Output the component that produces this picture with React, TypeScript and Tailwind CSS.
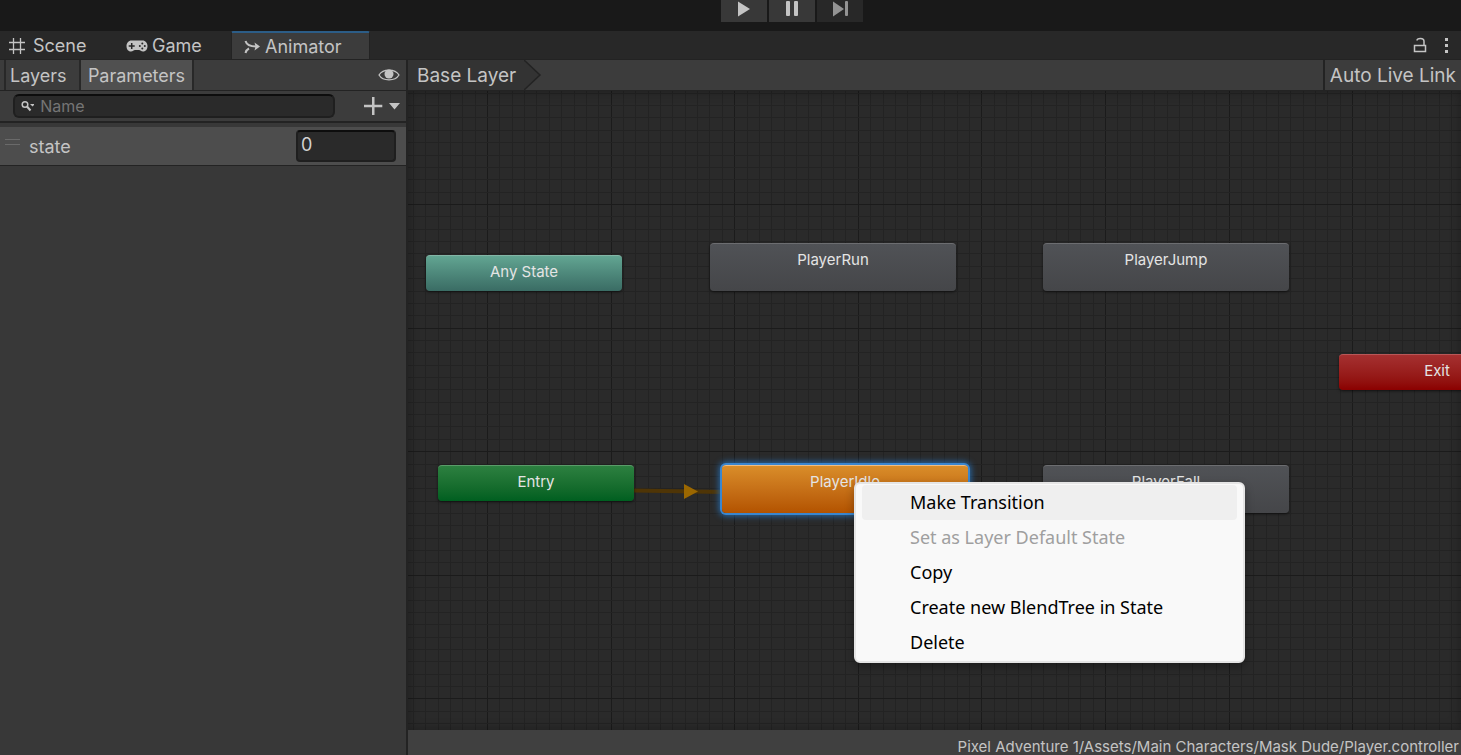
import React, { useState } from 'react';

interface StateNode {
  id: string;
  label: string;
  position: string;
  colors: string;
}

const plainShadow = 'shadow-[0_1px_3px_rgba(0,0,0,0.6)]';
const selectedShadow = 'shadow-[0_0_0_2px_#3a86cf,0_0_6px_3px_#2769a8]';

const stateNodes: StateNode[] = [
  { id: 'any', label: 'Any State', position: 'left-[18px] top-[164px] w-[196px] h-9', colors: 'border-t-[#83b5a6] from-[#62a592] to-[#3a6c64]' },
  { id: 'run', label: 'PlayerRun', position: 'left-[302px] top-[152px] w-[246px] h-12', colors: 'border-t-[#6c6d70] from-[#505256] to-[#454649]' },
  { id: 'jump', label: 'PlayerJump', position: 'left-[635px] top-[152px] w-[246px] h-12', colors: 'border-t-[#6c6d70] from-[#505256] to-[#454649]' },
  { id: 'exit', label: 'Exit', position: 'left-[931px] top-[263px] w-[196px] h-9', colors: 'border-t-[#b85757] from-[#a53030] to-[#8b0000]' },
  { id: 'entry', label: 'Entry', position: 'left-[30px] top-[374px] w-[196px] h-9', colors: 'border-t-[#5a9c69] from-[#2c8040] to-[#005f20]' },
  { id: 'idle', label: 'PlayerIdle', position: 'left-[314px] top-[374px] w-[246px] h-12', colors: 'border-t-[#edbd85] from-[#d98d29] to-[#b35300]' },
  { id: 'fall', label: 'PlayerFall', position: 'left-[635px] top-[374px] w-[246px] h-12', colors: 'border-t-[#6c6d70] from-[#505256] to-[#454649]' },
];

const menuItems = [
  { label: 'Make Transition', disabled: false },
  { label: 'Set as Layer Default State', disabled: true },
  { label: 'Copy', disabled: false },
  { label: 'Create new BlendTree in State', disabled: false },
  { label: 'Delete', disabled: false },
];

const GridLines: React.FC = () => {
  const step = 12.36;
  const lines = Array.from({ length: 240 }, (_, i) => i - 9);

  return (
    <svg className="absolute inset-0 h-full w-full" shapeRendering="crispEdges" aria-hidden="true">
      {lines.map((i) => {
        const x = Math.round(79 + i * step);
        return <line key={`x${i}`} x1={x + 0.5} x2={x + 0.5} y1="0" y2="100%" stroke={i % 10 === 0 ? '#1b1b1b' : '#232323'} />;
      })}
      {lines.map((i) => {
        const y = Math.round(113 + i * step);
        return <line key={`y${i}`} x1="0" x2="100%" y1={y + 0.5} y2={y + 0.5} stroke={i % 10 === 0 ? '#1b1b1b' : '#232323'} />;
      })}
    </svg>
  );
};

const PlaybackControls: React.FC = () => (
  <div className="flex h-[31px] shrink-0 items-start gap-0.5 bg-[#191919] pl-[721px]">
    <button type="button" aria-label="Play" className="flex h-[22px] w-[46px] justify-center bg-[#383838]">
      <svg width="46" height="22" fill="#c4c4c4"><path d="M17 1.5v15L29 9z" /></svg>
    </button>
    <button type="button" aria-label="Pause" className="flex h-[22px] w-[46px] justify-center bg-[#383838]">
      <svg width="46" height="22" fill="#c4c4c4"><rect x="17" y="1" width="4" height="15" rx="1" /><rect x="25" y="1" width="4" height="15" rx="1" /></svg>
    </button>
    <button type="button" aria-label="Step" className="flex h-[22px] w-[46px] justify-center bg-[#282828]">
      <svg width="46" height="22" fill="#939393"><path d="M16 1.5v15L27 9z" /><rect x="28" y="1" width="3" height="15" rx="1" /></svg>
    </button>
  </div>
);

const WindowTabs: React.FC = () => (
  <div className="flex h-[29px] shrink-0 border-b border-[#232323] bg-[#282828] text-lg leading-7 text-[#c4c4c4]">
    <button type="button" className="flex w-[117px] items-center gap-2 pl-[9px] pt-0.5">
      <svg width="16" height="16" fill="none" stroke="#c4c4c4" strokeWidth="1.3"><path d="M4.5 0v16M11.5 0v16M0 4.5h16M0 11.5h16" /></svg>
      Scene
    </button>
    <button type="button" className="flex w-[114px] items-center gap-1 pl-[9px] pt-0.5">
      <svg width="22" height="12">
        <path d="M5.5 .5h11C19.500 .5 21.500 3 21.500 6s-1.500 5.500-4.500 5.500c-2 0-2.500-1.500-4-1.500H9c-1.500 0-2 1.500-4 1.500C2 11.500 .5 9 .5 6S2.500 .5 5.500 .5z" fill="#c4c4c4" />
        <path d="M5.700 3v6M2.700 6h6" stroke="#282828" strokeWidth="1.500" />
        <g fill="#282828"><circle cx="16.300" cy="3.500" r="1" /><circle cx="16.300" cy="8.500" r="1" /><circle cx="13.800" cy="6" r="1" /><circle cx="18.800" cy="6" r="1" /></g>
      </svg>
      Game
    </button>
    <button type="button" className="flex w-[139px] items-center gap-1 rounded-t-xs border-x border-t-2 border-x-[#232323] border-t-[#2c5d87] bg-[#3c3c3c] pl-3 pt-px">
      <svg width="17" height="14" fill="none" stroke="#c4c4c4" strokeWidth="2">
        <path d="M1.500 1C2.500 4.500 5 6.500 12 6.500M1.500 13c.5-2 1.500-3.500 3.500-4.500" />
        <path d="M10.500 2.500l5.500 4-5.500 4 1-4z" fill="#c4c4c4" stroke="none" />
      </svg>
      Animator
    </button>
    <div className="ml-auto flex items-center gap-4 pr-2.5">
      <button type="button" aria-label="Lock">
        <svg width="14" height="16" fill="none" stroke="#c4c4c4" strokeWidth="1.500"><path d="M1.500 8.500h11v6h-11zM11 8V4.500C11 2.500 9.500 1.500 7.500 1.500S4 2.500 4 3.500" /></svg>
      </button>
      <button type="button" aria-label="More options">
        <svg width="8" height="16" fill="#c4c4c4"><rect x="2" y="1" width="3" height="3" /><rect x="2" y="7" width="3" height="3" /><rect x="2" y="13" width="3" height="3" /></svg>
      </button>
    </div>
  </div>
);

const ParametersPanel: React.FC = () => {
  const [search, setSearch] = useState('');
  const [value, setValue] = useState('0');

  return (
    <aside className="flex w-[408px] shrink-0 flex-col border-r-2 border-[#232323] bg-[#383838]">
      <div className="flex h-[31px] border-b border-[#232323] bg-[#3c3c3c] pl-1 text-lg text-[#c4c4c4]">
        <button type="button" className="w-[77px] border-x-2 border-[#282828] pl-1 pt-0.5 text-left">Layers</button>
        <button type="button" className="w-[113px] border-r-2 border-[#282828] bg-[#505050] pt-0.5">Parameters</button>
        <button type="button" aria-label="Show preview" className="ml-auto pr-1.5">
          <svg width="22" height="14">
            <path d="M1 7C5 .5 17 .5 21 7 17 13.500 5 13.500 1 7z" fill="none" stroke="#c4c4c4" strokeWidth="1.300" />
            <circle cx="11" cy="6" r="4.500" fill="#c4c4c4" />
          </svg>
        </button>
      </div>
      <div className="flex h-8 items-center border-b-2 border-[#232323] bg-[#3c3c3c] pl-[13px] pr-1.5">
        <label className="flex h-6 w-[322px] items-center gap-1.5 rounded-md border-2 border-[#1f1f1f] border-t-[#0d0d0d] bg-[#2a2a2a] pl-1.5">
          <svg width="14" height="12" fill="none" stroke="#c4c4c4" strokeWidth="1.500">
            <circle cx="4" cy="4.500" r="2.800" />
            <path d="M6 6.500l3.500 4" strokeWidth="2" />
            <path d="M9 4h5l-2.500 2.500z" fill="#c4c4c4" stroke="none" />
          </svg>
          <input
            type="text"
            aria-label="Search parameters"
            placeholder="Name"
            value={search}
            onChange={(e) => setSearch(e.target.value)}
            className="w-full bg-transparent text-base text-[#c4c4c4] outline-none placeholder:text-[#757575]"
          />
        </label>
        <button type="button" aria-label="Add parameter" className="ml-auto">
          <svg width="36" height="18" fill="#c4c4c4"><path d="M8 0h2.500v7.800h7.800v2.500h-7.800V18H8v-7.700H0V7.800h8zM25 6h11l-5.500 6.500z" /></svg>
        </button>
      </div>
      <div className="mt-1 flex h-[39px] items-center border-b border-[#232323] bg-[#4d4d4d] pl-[5px] pr-2.5 text-lg text-[#c4c4c4]">
        <svg width="15" height="16" stroke="#6a6a6a"><path d="M0 1.500h15M0 6.500h15" /></svg>
        <label htmlFor="state-value" className="pl-[9px] pt-0.5">state</label>
        <input
          id="state-value"
          type="text"
          value={value}
          onChange={(e) => setValue(e.target.value)}
          className="ml-auto h-8 w-[100px] rounded-sm border-2 border-[#1f1f1f] border-t-[#0d0d0d] bg-[#2a2a2a] pb-1 pl-[3px] text-[#d2d2d2] outline-none"
        />
      </div>
    </aside>
  );
};

const ContextMenu: React.FC = () => (
  <div role="menu" className="absolute left-[446px] top-[391px] w-[391px] rounded-md border-2 border-[#e5e5e5] bg-[#f9f9f9] px-1.5 py-px font-['Noto_Sans',sans-serif] text-lg text-black shadow-[0_4px_10px_rgba(0,0,0,0.3)]">
    {menuItems.map((item) => (
      <button
        key={item.label}
        type="button"
        role="menuitem"
        disabled={item.disabled}
        className="block h-[35px] w-full rounded-sm pb-0.5 pl-12 text-left first:bg-[#efefef] hover:bg-[#efefef] disabled:text-[#9f9f9f]"
      >
        {item.label}
      </button>
    ))}
  </div>
);

const AnimatorGraph: React.FC = () => (
  <main className="flex min-w-0 flex-1 flex-col">
    <div className="flex h-[31px] shrink-0 border-b border-[#232323] bg-[#3c3c3c] text-[19px] leading-7 text-[#c4c4c4]">
      <button type="button" className="bg-[#333333] pl-[9px] pr-2 pt-0.5">Base Layer</button>
      <svg width="18" height="30"><path d="M0 0L16 15 0 30z" fill="#333333" /><path d="M0 0L16 15 0 30" fill="none" stroke="#232323" strokeWidth="1.500" /></svg>
      <button type="button" className="ml-auto whitespace-nowrap border-l-2 border-[#232323] px-[5px] pt-0.5">Auto Live Link</button>
    </div>
    <div className="relative flex-1 overflow-hidden bg-[#2a2a2a]">
      <GridLines />
      <div className="pointer-events-none absolute inset-0 shadow-[inset_0_0_12px_rgba(0,0,0,0.3)]" />
      <svg className="absolute left-[226px] top-[390px]" width="90" height="20">
        <path d="M0 9.500L90 11" stroke="#4f3506" strokeWidth="4" />
        <path d="M50 3v15l14-7.500z" fill="#9b6700" />
      </svg>
      {stateNodes.map((node) => (
        <div
          key={node.id}
          className={`absolute rounded-sm border-t bg-linear-to-b pt-1.5 text-center text-[15px] leading-5 text-[#e4e4e4] ${node.id === 'idle' ? selectedShadow : plainShadow} ${node.position} ${node.colors}`}
        >
          {node.label}
        </div>
      ))}
      <ContextMenu />
    </div>
    <footer className="h-[25px] shrink-0 bg-[#404040] pr-0.5 pt-[7px] text-right text-[15px] leading-5 text-[#c4c4c4]">
      Pixel Adventure 1/Assets/Main Characters/Mask Dude/Player.controller
    </footer>
  </main>
);

const App: React.FC = () => {
  return (
    <div className="flex h-screen flex-col overflow-hidden bg-[#191919] font-['Inter',sans-serif]">
      <PlaybackControls />
      <WindowTabs />
      <div className="flex min-h-0 flex-1">
        <ParametersPanel />
        <AnimatorGraph />
      </div>
    </div>
  );
};

export default App;
